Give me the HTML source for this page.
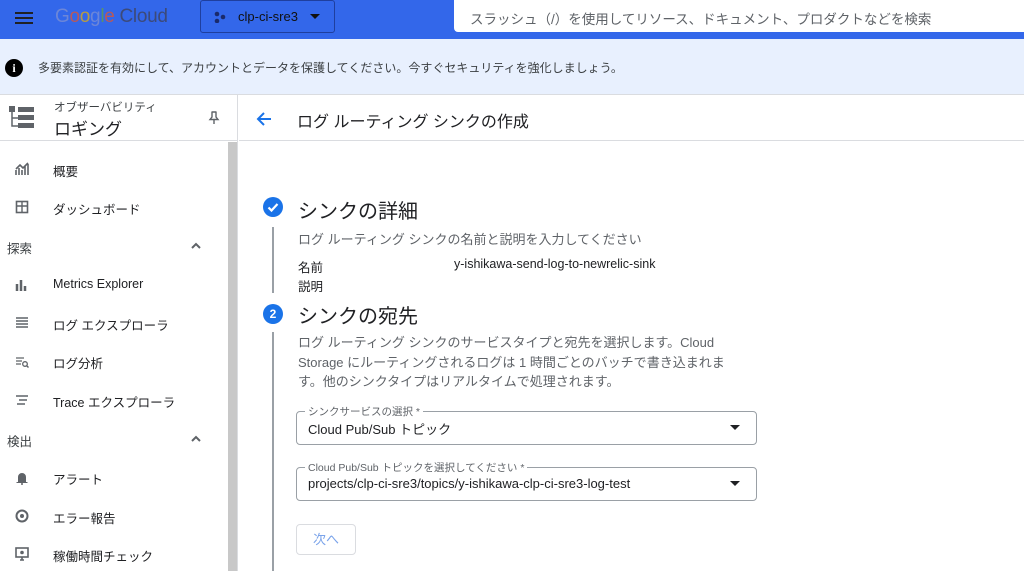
<!DOCTYPE html>
<html><head><meta charset="utf-8"><style>
*{margin:0;padding:0;box-sizing:border-box}
body{width:1024px;height:571px;overflow:hidden;background:#fff;font-family:"Liberation Sans","Noto Sans CJK JP",sans-serif;color:#202124;position:relative}
.abs{position:absolute}
.hdr{left:0;top:0;width:1024px;height:39px;background:#3367ea}
.ban{left:0;top:39px;width:1024px;height:56px;background:#e8f0fe;border-bottom:1px solid #dadce0}
.side{left:0;top:95px;width:238px;height:476px;border-right:1px solid #dadce0}
.nav{position:absolute;left:53px;font-size:12.5px;color:#202124}
.ico{position:absolute;left:15px;width:14px;height:14px}
.sec{position:absolute;left:7px;font-size:12.5px;color:#3c4043}
.chev{position:absolute;left:190px}
.t{font-size:13px;color:#5f6368}
</style></head><body>
<div class="abs hdr">
  <div class="abs" style="left:15px;top:12px;width:18px;height:2px;background:#202124;box-shadow:0 5px 0 #202124,0 10px 0 #202124"></div>
  <div class="abs" style="left:55px;top:6px;font-size:19px;letter-spacing:-0.3px"><span style="color:#6c86d8">G</span><span style="color:#b75a5a">o</span><span style="color:#b89a44">o</span><span style="color:#6c86d8">g</span><span style="color:#5a9468">l</span><span style="color:#b75a5a">e</span> <span style="color:#3c4a7a">Cloud</span></div>
  <div class="abs" style="left:200px;top:0;width:135px;height:33px;border:1px solid #1f3f9e;border-radius:3px"></div>
  <svg class="abs" style="left:214px;top:11px" width="12" height="12"><circle cx="3" cy="3" r="2.3" fill="#1a2a6b"/><circle cx="9" cy="6" r="2.3" fill="#1a2a6b"/><circle cx="3" cy="10" r="2.3" fill="#1a2a6b"/></svg>
  <div class="abs" style="left:238px;top:9px;font-size:13px;color:#111">clp-ci-sre3</div>
  <div class="abs" style="left:310px;top:14px;width:0;height:0;border-left:5px solid transparent;border-right:5px solid transparent;border-top:5px solid #111"></div>
  <div class="abs" style="left:454px;top:0;width:580px;height:32px;background:#fff;border-radius:0 0 4px 4px"></div>
  <div class="abs" style="left:470px;top:8px;font-size:13.5px;color:#5f6368">スラッシュ（/）を使用してリソース、ドキュメント、プロダクトなどを検索</div>
</div>
<div class="abs ban">
  <div class="abs" style="left:5px;top:20px;width:18px;height:18px;border-radius:50%;background:#000;color:#fff;font-size:12px;font-weight:bold;text-align:center;line-height:18px;font-family:'Liberation Serif',serif">i</div>
  <div class="abs" style="left:38px;top:20px;font-size:12px;color:#3c4043">多要素認証を有効にして、アカウントとデータを保護してください。今すぐセキュリティを強化しましょう。</div>
</div>
<div class="abs side">
  <svg class="abs" style="left:8px;top:10px" width="28" height="26"><rect x="1" y="1" width="6" height="6" fill="#5f6368"/><rect x="10" y="2" width="16" height="5" fill="#5f6368"/><rect x="10" y="10" width="16" height="5" fill="#5f6368"/><rect x="10" y="18" width="16" height="5" fill="#5f6368"/><path d="M4 7V21H10M4 13H10" stroke="#5f6368" stroke-width="1.5" fill="none"/></svg>
  <div class="abs" style="left:54px;top:4px;font-size:11.5px;color:#3c4043">オブザーバビリティ</div>
  <div class="abs" style="left:54px;top:20px;font-size:17px;color:#202124">ロギング</div>
  <svg class="abs" style="left:208px;top:16px" width="12" height="14" viewBox="0 0 12 14"><path d="M3.5 1H8.5M4 1V6L2 8.5H10L8 6V1M6 8.5V13" stroke="#5f6368" stroke-width="1.4" fill="none"/></svg>
  <div class="abs" style="left:0;top:45px;width:238px;height:1px;background:#dadce0"></div>
  <div class="abs" style="left:228px;top:47px;width:9px;height:429px;background:#c8c8c8"></div>
</div>
<svg class="ico" style="top:162px" viewBox="0 0 14 14"><path d="M1 13V8M4 13V6M7 13V8M10 13V4M13 13V2M1 7L5 3L8 6L13 1" stroke="#5f6368" stroke-width="1.6" fill="none"/></svg>
<div class="nav" style="top:161px">概要</div>
<svg class="ico" style="top:200px" viewBox="0 0 14 14"><rect x="1.5" y="1.5" width="11" height="11" stroke="#5f6368" stroke-width="1.6" fill="none"/><path d="M7 2V12M2 6H12" stroke="#5f6368" stroke-width="1.4"/></svg>
<div class="nav" style="top:199px">ダッシュボード</div>
<div class="sec" style="top:238px">探索</div>
<svg class="chev" style="top:242px" width="12" height="8"><path d="M2 6L6 2L10 6" stroke="#5f6368" stroke-width="2" fill="none"/></svg>
<svg class="ico" style="top:278px" viewBox="0 0 14 14"><path d="M2 13V6M6 13V2M10 13V8" stroke="#5f6368" stroke-width="2.5"/></svg>
<div class="nav" style="top:277px">Metrics Explorer</div>
<svg class="ico" style="top:316px" viewBox="0 0 14 14"><path d="M1 2H13M1 5H13M1 8H13M1 11H13" stroke="#5f6368" stroke-width="1.6"/></svg>
<div class="nav" style="top:315px">ログ エクスプローラ</div>
<svg class="ico" style="top:355px" viewBox="0 0 14 14"><path d="M1 3H9M1 6H7M1 9H6" stroke="#5f6368" stroke-width="1.3"/><circle cx="10" cy="9" r="2.3" stroke="#5f6368" stroke-width="1.3" fill="none"/><path d="M11.5 10.5L13.5 12.5" stroke="#5f6368" stroke-width="1.5"/></svg>
<div class="nav" style="top:353px">ログ分析</div>
<svg class="ico" style="top:393px" viewBox="0 0 14 14"><path d="M1 3H13M4 7H12M2 11H10" stroke="#5f6368" stroke-width="1.6"/></svg>
<div class="nav" style="top:392px">Trace エクスプローラ</div>
<div class="sec" style="top:431px">検出</div>
<svg class="chev" style="top:435px" width="12" height="8"><path d="M2 6L6 2L10 6" stroke="#5f6368" stroke-width="2" fill="none"/></svg>
<svg class="ico" style="top:471px" viewBox="0 0 14 14"><path d="M3 11V6A4 4 0 0 1 11 6V11H12.5V12H1.5V11Z" fill="#5f6368"/><circle cx="7" cy="13" r="1" fill="#5f6368"/></svg>
<div class="nav" style="top:469px">アラート</div>
<svg class="ico" style="top:509px" viewBox="0 0 14 14"><circle cx="7" cy="7" r="5.5" stroke="#5f6368" stroke-width="2" fill="none"/><circle cx="7" cy="7" r="2" fill="#5f6368"/></svg>
<div class="nav" style="top:508px">エラー報告</div>
<svg class="ico" style="top:547px" viewBox="0 0 14 14"><rect x="1" y="1" width="12" height="9" stroke="#5f6368" stroke-width="1.6" fill="none"/><path d="M5 13H9M7 10V13" stroke="#5f6368" stroke-width="1.6"/><circle cx="7" cy="5.5" r="1.8" fill="#5f6368"/></svg>
<div class="nav" style="top:546px">稼働時間チェック</div>

<div class="abs" style="left:239px;top:140px;width:785px;height:1px;background:#dadce0"></div>
<svg class="abs" style="left:255px;top:110px" width="18" height="18" viewBox="0 0 18 18"><path d="M16 9H3M9 3L3 9L9 15" stroke="#1a73e8" stroke-width="2" fill="none"/></svg>
<div class="abs" style="left:297px;top:108px;font-size:16px;color:#202124">ログ ルーティング シンクの作成</div>

<svg class="abs" style="left:263px;top:197px" width="20" height="20"><circle cx="10" cy="10" r="10" fill="#1a73e8"/><path d="M5.5 10.5L8.5 13.5L14.5 7" stroke="#fff" stroke-width="2.2" fill="none"/></svg>
<div class="abs" style="left:298px;top:195px;font-size:20px;color:#202124">シンクの詳細</div>
<div class="abs" style="left:272px;top:227px;width:2px;height:66px;background:#9aa0a6"></div>
<div class="abs t" style="left:298px;top:229px">ログ ルーティング シンクの名前と説明を入力してください</div>
<div class="abs" style="left:298px;top:257px;font-size:12.5px">名前</div>
<div class="abs" style="left:454px;top:257px;font-size:12.5px">y-ishikawa-send-log-to-newrelic-sink</div>
<div class="abs" style="left:298px;top:276px;font-size:12.5px">説明</div>
<div class="abs" style="left:263px;top:304px;width:20px;height:20px;border-radius:50%;background:#1a73e8;color:#fff;font-size:12px;font-weight:bold;text-align:center;line-height:20px">2</div>
<div class="abs" style="left:298px;top:300px;font-size:20px;color:#202124">シンクの宛先</div>
<div class="abs" style="left:272px;top:332px;width:2px;height:239px;background:#9aa0a6"></div>
<div class="abs t" style="left:298px;top:333px;width:445px;line-height:19.5px">ログ ルーティング シンクのサービスタイプと宛先を選択します。Cloud Storage にルーティングされるログは 1 時間ごとのバッチで書き込まれます。他のシンクタイプはリアルタイムで処理されます。</div>

<div class="abs" style="left:296px;top:411px;width:461px;height:34px;border:1px solid #9aa0a6;border-radius:4px"></div>
<div class="abs" style="left:305px;top:404px;padding:0 3px;background:#fff;font-size:10.5px;color:#5f6368">シンクサービスの選択 *</div>
<div class="abs" style="left:308px;top:419px;font-size:13px">Cloud Pub/Sub トピック</div>
<div class="abs" style="left:730px;top:425px;border-left:5px solid transparent;border-right:5px solid transparent;border-top:5px solid #202124"></div>

<div class="abs" style="left:296px;top:467px;width:461px;height:34px;border:1px solid #9aa0a6;border-radius:4px"></div>
<div class="abs" style="left:305px;top:460px;padding:0 3px;background:#fff;font-size:10.5px;color:#5f6368">Cloud Pub/Sub トピックを選択してください *</div>
<div class="abs" style="left:308px;top:476px;font-size:13px">projects/clp-ci-sre3/topics/y-ishikawa-clp-ci-sre3-log-test</div>
<div class="abs" style="left:730px;top:481px;border-left:5px solid transparent;border-right:5px solid transparent;border-top:5px solid #202124"></div>

<div class="abs" style="left:296px;top:524px;width:60px;height:31px;border:1px solid #dadce0;border-radius:4px;color:#7aa3ea;font-size:13px;text-align:center;line-height:29px">次へ</div>
</body></html>
